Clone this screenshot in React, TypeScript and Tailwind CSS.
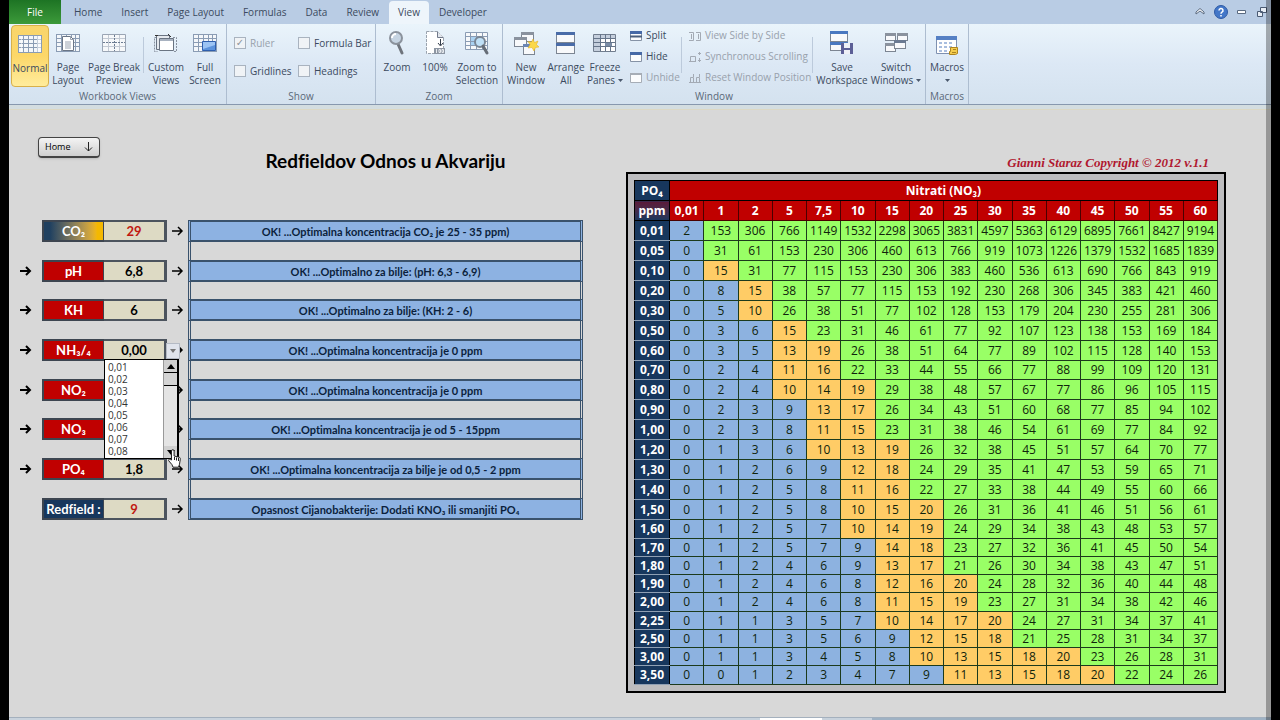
import type { ReactNode } from 'react'

const tabs = ['Home', 'Insert', 'Page Layout', 'Formulas', 'Data', 'Review', 'View', 'Developer']

const nitrates = ['0,01', '1', '2', '5', '7,5', '10', '15', '20', '25', '30', '35', '40', '45', '50', '55', '60']

const ratios: [string, number[]][] = [
    ['0,01', [2, 153, 306, 766, 1149, 1532, 2298, 3065, 3831, 4597, 5363, 6129, 6895, 7661, 8427, 9194]],
    ['0,05', [0, 31, 61, 153, 230, 306, 460, 613, 766, 919, 1073, 1226, 1379, 1532, 1685, 1839]],
    ['0,10', [0, 15, 31, 77, 115, 153, 230, 306, 383, 460, 536, 613, 690, 766, 843, 919]],
    ['0,20', [0, 8, 15, 38, 57, 77, 115, 153, 192, 230, 268, 306, 345, 383, 421, 460]],
    ['0,30', [0, 5, 10, 26, 38, 51, 77, 102, 128, 153, 179, 204, 230, 255, 281, 306]],
    ['0,50', [0, 3, 6, 15, 23, 31, 46, 61, 77, 92, 107, 123, 138, 153, 169, 184]],
    ['0,60', [0, 3, 5, 13, 19, 26, 38, 51, 64, 77, 89, 102, 115, 128, 140, 153]],
    ['0,70', [0, 2, 4, 11, 16, 22, 33, 44, 55, 66, 77, 88, 99, 109, 120, 131]],
    ['0,80', [0, 2, 4, 10, 14, 19, 29, 38, 48, 57, 67, 77, 86, 96, 105, 115]],
    ['0,90', [0, 2, 3, 9, 13, 17, 26, 34, 43, 51, 60, 68, 77, 85, 94, 102]],
    ['1,00', [0, 2, 3, 8, 11, 15, 23, 31, 38, 46, 54, 61, 69, 77, 84, 92]],
    ['1,20', [0, 1, 3, 6, 10, 13, 19, 26, 32, 38, 45, 51, 57, 64, 70, 77]],
    ['1,30', [0, 1, 2, 6, 9, 12, 18, 24, 29, 35, 41, 47, 53, 59, 65, 71]],
    ['1,40', [0, 1, 2, 5, 8, 11, 16, 22, 27, 33, 38, 44, 49, 55, 60, 66]],
    ['1,50', [0, 1, 2, 5, 8, 10, 15, 20, 26, 31, 36, 41, 46, 51, 56, 61]],
    ['1,60', [0, 1, 2, 5, 7, 10, 14, 19, 24, 29, 34, 38, 43, 48, 53, 57]],
    ['1,70', [0, 1, 2, 5, 7, 9, 14, 18, 23, 27, 32, 36, 41, 45, 50, 54]],
    ['1,80', [0, 1, 2, 4, 6, 9, 13, 17, 21, 26, 30, 34, 38, 43, 47, 51]],
    ['1,90', [0, 1, 2, 4, 6, 8, 12, 16, 20, 24, 28, 32, 36, 40, 44, 48]],
    ['2,00', [0, 1, 2, 4, 6, 8, 11, 15, 19, 23, 27, 31, 34, 38, 42, 46]],
    ['2,25', [0, 1, 1, 3, 5, 7, 10, 14, 17, 20, 24, 27, 31, 34, 37, 41]],
    ['2,50', [0, 1, 1, 3, 5, 6, 9, 12, 15, 18, 21, 25, 28, 31, 34, 37]],
    ['3,00', [0, 1, 1, 3, 4, 5, 8, 10, 13, 15, 18, 20, 23, 26, 28, 31]],
    ['3,50', [0, 0, 1, 2, 3, 4, 7, 9, 11, 13, 15, 18, 20, 22, 24, 26]],
]

const params = [
    { id: 'co2', name: 'CO₂', value: '29', kind: 'result', message: 'OK! ...Optimalna koncentracija CO₂ je 25 - 35 ppm)', gap: 'h-[18px]' },
    { id: 'ph', name: 'pH', value: '6,8', kind: 'input', message: 'OK! ...Optimalno za bilje: (pH: 6,3 - 6,9)', gap: 'h-[17px]' },
    { id: 'kh', name: 'KH', value: '6', kind: 'input', message: 'OK! ...Optimalno za bilje: (KH: 2 - 6)', gap: 'h-[18px]' },
    { id: 'nh', name: 'NH₃/₄', value: '0,00', kind: 'list', message: 'OK! ...Optimalna koncentracija je 0 ppm', gap: 'h-[18px]' },
    { id: 'no2', name: 'NO₂', value: '0,00', kind: 'input', message: 'OK! ...Optimalna koncentracija je 0 ppm', gap: 'h-[17px]' },
    { id: 'no3', name: 'NO₃', value: '15', kind: 'input', message: 'OK! ...Optimalna koncentracija je od 5 - 15ppm', gap: 'h-[18px]' },
    { id: 'po4', name: 'PO₄', value: '1,8', kind: 'input', message: 'OK! ...Optimalna koncentracija za bilje je od 0,5 - 2 ppm', gap: 'h-[18px]' },
    { id: 'redfield', name: 'Redfield :', value: '9', kind: 'result', message: 'Opasnost Cijanobakterije: Dodati KNO₃ ili smanjiti PO₄', gap: '' },
]

const options = ['0,01', '0,02', '0,03', '0,04', '0,05', '0,06', '0,07', '0,08']

const Grid = ({ children }: { children?: ReactNode }) => (
    <svg width="26" height="22" viewBox="0 0 26 22">
        <path d="M1 2h24v18H1z" fill="#f4f7fa" />
        <path d="M1 2.500h24M1 6.500h24M1 10.500h24M1 14.500h24M1 19.500h24M1.500 2v18M6.500 2v18M11.500 2v18M16.500 2v18M20.500 2v18M24.500 2v18" stroke="#8a9cb4" fill="none" />
        {children}
    </svg>
)

const NormalIcon = () => <Grid><path d="M4 3h1v16H4zM20 3h4v16h-4z" fill="#fff" opacity=".5" /></Grid>

const PageLayoutIcon = () => (
    <Grid>
        <path d="M7.500 4.500h8l3 3v11h-11z" fill="#fff" stroke="#6b7686" />
        <path d="M15.500 4.500v3h3M10 10h6M10 12h6M10 14h6M10 16h6" stroke="#9aa3b0" fill="none" />
    </Grid>
)

const PageBreakIcon = () => (
    <svg width="26" height="22" viewBox="0 0 26 22">
        <path d="M1.500 2.500h23v17h-23z" fill="#f6f8fa" stroke="#9aa5b4" />
        <path d="M2 6.500h22M2 14.500h22M7.500 3v16M18.500 3v16" stroke="#c3cad4" />
        <path d="M2 10.500h22M13.500 3v16" stroke="#6c7c92" strokeDasharray="2 1" />
    </svg>
)

const CustomIcon = () => (
    <svg width="26" height="22" viewBox="0 0 26 22">
        <path d="M3.500 5.500h-2v14h3M20 5.500h3.500v14H20" stroke="#88919e" fill="none" strokeDasharray="2 1" />
        <path d="M3.500 3.500h13v14h-13z" fill="#e6eaef" stroke="#6a7482" />
        <path d="M6.500 6.500h14v12h-14z" fill="#fff" stroke="#6a7482" />
        <path d="M7 7h13v2H7z" fill="#a8b2c0" />
        <path d="M2 3.500h3M15 2l3 3" stroke="#333" />
    </svg>
)

const FullScreenIcon = () => (
    <Grid>
        <path d="M10.500 9.500h13v9h-13z" fill="#5c93dc" stroke="#2e5fae" />
        <path d="M11 10h12v3L11 17z" fill="#9cc4f4" />
    </Grid>
)

const ZoomIcon = () => (
    <svg width="20" height="26" viewBox="0 0 20 26">
        <path d="M11 14l4 9" stroke="#6f747c" strokeWidth="3" strokeLinecap="round" />
        <circle cx="9" cy="8" r="6" fill="#c6d4e2" stroke="#8b929c" strokeWidth="2" />
        <path d="M5 8a4 4 0 0 1 4-4" stroke="#fff" strokeWidth="2" fill="none" />
    </svg>
)

const HundredIcon = () => (
    <svg width="24" height="26" viewBox="0 0 24 26">
        <path d="M3.500 1.500h11l6 6v16h-17z" fill="#fff" stroke="#9aa3ae" strokeDasharray="3 1" />
        <path d="M14.500 1.500v6h6" fill="#e2e6ec" stroke="#70798a" />
        <path d="M17.500 9v6M15 13l2.500 3 2.500-3" stroke="#333c4a" fill="none" />
        <path d="M11 18h11v6H11z" fill="#8c95a2" />
        <path d="M13.500 19v4M16 19.500h1.500v3H16zM19 19.500h1.500v3H19z" stroke="#e8ebef" fill="none" />
    </svg>
)

const ZoomSelectionIcon = () => (
    <svg width="26" height="26" viewBox="0 0 26 26">
        <path d="M1.500 2.500h22v17h-22z" fill="#f7f9fb" stroke="#8a9cb4" />
        <path d="M6 6h13v10H6z" fill="#a9d2f2" />
        <path d="M1 6.500h22M1 11.500h22M1 15.500h22M6.500 2v17M12.500 2v17M18.500 2v17" stroke="#8a9cb4" />
        <circle cx="16" cy="12" r="5" fill="#bfe0f7" stroke="#7a8694" strokeWidth="2" />
        <path d="M19 16l4 7" stroke="#666d77" strokeWidth="3" strokeLinecap="round" />
    </svg>
)

const Win = ({ x, y, w, h, bar = '#8a929e' }: { x: number; y: number; w: number; h: number; bar?: string }) => (
    <>
        <rect x={x + 0.5} y={y + 0.5} width={w} height={h} fill="#f8f9fb" stroke="#7c8592" />
        <rect x={x} y={y} width={w + 1} height="3" fill={bar} />
    </>
)

const NewWindowIcon = () => (
    <svg width="26" height="26" viewBox="0 0 26 26">
        <Win x={8} y={2} w={12} h={9} />
        <Win x={1} y={7} w={12} h={9} />
        <Win x={10} y={14} w={11} h={10} bar="#6b86b4" />
        <path d="M20 9l1.500 3.500L25 11l-1.500 3.500L26 17l-3.500.5L21 21l-2-3.500-4 .5 2-3.500-2-3 3.500.5z" fill="#fbd84a" stroke="#e0aa1c" strokeWidth=".5" />
    </svg>
)

const ArrangeIcon = () => (
    <svg width="22" height="26" viewBox="0 0 22 26">
        <Win x={1} y={2} w={18} h={10} bar="#4a6ca8" />
        <Win x={1} y={13} w={18} h={10} bar="#4a6ca8" />
    </svg>
)

const FreezeIcon = () => (
    <svg width="26" height="22" viewBox="0 0 26 22">
        <path d="M1.500 2.500h22v17h-22z" fill="#fff" stroke="#717d8e" />
        <path d="M2 3h21v3H2zM2 6h6v13H2z" fill="#c5cfdd" />
        <path d="M1 6.500h22M1 10.500h22M1 14.500h22M8.500 2v17M13.500 2v17M18.500 2v17" stroke="#66758a" />
        <path d="M13 11h7v3h-7z" fill="#7a8ca6" />
    </svg>
)

const SaveWorkspaceIcon = () => (
    <svg width="26" height="26" viewBox="0 0 26 26">
        <Win x={1} y={1} w={17} h={10} bar="#4a78c0" />
        <Win x={1} y={12} w={17} h={8} bar="#4a78c0" />
        <path d="M12 13h12v11H12z" fill="#5c5f96" />
        <path d="M15 13h6v5h-6zM15 20h6v4h-6z" fill="#eef0f6" />
    </svg>
)

const SwitchIcon = () => (
    <svg width="26" height="22" viewBox="0 0 26 22">
        <Win x={2} y={1} w={10} h={7} />
        <Win x={14} y={1} w={10} h={7} />
        <Win x={2} y={11} w={10} h={8} />
        <Win x={11} y={8} w={11} h={8} bar="#6b7a92" />
    </svg>
)

const MacrosIcon = () => (
    <svg width="24" height="26" viewBox="0 -4 24 26">
        <path d="M1.500 2.500h20v17h-20z" fill="#fff" stroke="#7f91b0" />
        <path d="M1 2h21v4H1z" fill="#5580c4" />
        <path d="M4 8h3v2H4zM9 8h3v2H9zM14 8h3v2h-3zM4 12h3v2H4zM9 12h3v2H9zM14 12h3v2h-3zM4 16h3v2H4zM9 16h3v2H9z" fill="#a9bedf" />
        <path d="M15.500 13.500h7v6l-2 1h-6v-3h1z" fill="#f4cc4c" stroke="#ad8420" />
        <path d="M18 15.500h3M17 18.500h4" stroke="#ad8420" />
    </svg>
)

const SmallWin = ({ kind }: { kind: string }) => (
    <svg width="14" height="12" viewBox="0 0 14 12">
        <path d="M1.500 1.500h11v9h-11z" fill="#fbfcfd" stroke={kind === 'Unhide' ? '#a6adb6' : '#8693a6'} />
        {kind !== 'Unhide' && <path d="M1 1h12v3H1z" fill="#4669a6" />}
        {kind === 'Unhide' && <path d="M1 1h12v2H1z" fill="#a6adb6" />}
        {kind === 'Split' && <path d="M1 6.500h12" stroke="#4a5f7c" strokeWidth="2" />}
    </svg>
)

const SideIcon = ({ kind }: { kind: string }) => (
    <svg width="14" height="12" viewBox="0 0 14 12" fill="none" stroke="#a3aab4">
        {kind === 'View Side by Side' && <path d="M1 2.500h4.500v8H1M8 2.500h4.500v8H8M3.500 4v5M10.500 4v5" />}
        {kind === 'Synchronous Scrolling' && <path d="M1 10.500h7M2.500 5.500h5v5h-5zM11.500 1v3M10 2.500h3M11.500 7v4M10 9.500h3" />}
        {kind === 'Reset Window Position' && <path d="M1 10.500h12M2.500 5.500h3v5h-3zM8.500 5.500h3v5h-3zM5.500 2v3M11.500 2v3" />}
    </svg>
)

const Caret = () => <svg width="5" height="3" viewBox="0 0 5 3"><path d="M0 0h5L2.500 3z" fill="#4a586c" /></svg>

const BigButton = ({ lines, icon, width, active = false, menu = false }: { lines: string[]; icon: ReactNode; width: string; active?: boolean; menu?: boolean }) => (
    <button className={`${width} flex h-[62px] shrink-0 flex-col items-center whitespace-nowrap pt-1 leading-[13px] ${active ? 'rounded-sm border border-[#d8b04a] bg-linear-to-b from-[#f9d56c] via-[#fcd768] to-[#ffec9c]' : ''}`}>
        <span className="mb-1 flex h-7 items-center">{icon}</span>
        {lines.map((line, i) => (
            <span key={line} className="flex h-[13px] items-center gap-[3px]">
                {line}
                {menu && i === lines.length - 1 && <Caret />}
            </span>
        ))}
    </button>
)

const Group = ({ label, children }: { label: string; children: ReactNode }) => (
    <section aria-label={label} className="flex shrink-0 flex-col border-r border-[#adbdd0] pt-px">
        <div className="flex h-[65px] items-start px-0.5">{children}</div>
        <p className="text-center leading-[13px] text-[#5a6878]">{label}</p>
    </section>
)

const Divider = () => <span className="mx-0.5 mt-3 h-9 w-px bg-[#bccadb]"></span>

const Check = ({ label, checked = false, disabled = false }: { label: string; checked?: boolean; disabled?: boolean }) => (
    <label className={`flex h-7 items-center gap-1 whitespace-nowrap ${disabled ? 'text-[#98a1ac]' : ''}`}>
        <input type="checkbox" defaultChecked={checked} disabled={disabled} className="size-3 appearance-none border border-[#a9b3bf] bg-[#f0f3f6] before:block before:text-center before:font-['DejaVu_Sans'] before:text-[10px] before:leading-[10px] before:text-[#8d949d] checked:before:content-['✓']" />
        {label}
    </label>
)

const Ribbon = () => (
    <header className="font-['Open_Sans',sans-serif] text-[10px] text-[#3b4a5e]">
        <nav className="flex h-6 items-stretch bg-[#b9cce4]">
            <button className="w-[52px] bg-linear-to-b from-[#1d7424] to-[#3c9a3a] text-white">File</button>
            <div className="ml-1 flex gap-px">
                {tabs.map((tab) => (
                    <button key={tab} className={`whitespace-nowrap px-[9px] ${tab === 'View' ? 'mt-px rounded-t-sm bg-[#eef5fb]' : ''}`}>{tab}</button>
                ))}
            </div>
            <div className="ml-auto flex items-center gap-2 pr-[3px]">
                <button aria-label="Minimize ribbon"><svg width="12" height="12" viewBox="0 0 12 12"><path d="M2 6l4-3.500L10 6v2L6 5 2 8z" fill="#fff" stroke="#5a6a80" /></svg></button>
                <button aria-label="Help"><svg width="14" height="14" viewBox="0 0 14 14"><circle cx="7" cy="7" r="6.500" fill="#4377c8" stroke="#2f5aa4" /><path d="M5 5.500a2 2 0 1 1 3 1.700c-.8.5-1 .8-1 1.600M7 10v1.500" fill="none" stroke="#fff" strokeWidth="1.500" /></svg></button>
                <button aria-label="Minimize"><svg width="12" height="12" viewBox="0 0 12 12"><path d="M1.500 4.500h8v3h-8z" fill="#fff" stroke="#5a6a80" /></svg></button>
                <button aria-label="Restore"><svg width="12" height="12" viewBox="0 0 12 12"><path d="M4.500 1.500h6v5h-6zM1.500 5.500h5v5h-5z" fill="#e8eef6" stroke="#4a5a72" /></svg></button>
            </div>
        </nav>
        <div className="flex h-[81px] overflow-hidden border-b border-[#8798ae] bg-linear-to-b from-[#eaf4fb] via-[#dce8f5] to-[#d4e2ef]">
            <Group label="Workbook Views">
                <BigButton active width="w-[38px]" lines={['Normal']} icon={<NormalIcon />} />
                <BigButton width="w-[38px]" lines={['Page', 'Layout']} icon={<PageLayoutIcon />} />
                <BigButton width="w-[54px]" lines={['Page Break', 'Preview']} icon={<PageBreakIcon />} />
                <Divider />
                <BigButton width="w-[40px]" lines={['Custom', 'Views']} icon={<CustomIcon />} />
                <BigButton width="w-[38px]" lines={['Full', 'Screen']} icon={<FullScreenIcon />} />
            </Group>
            <Group label="Show">
                <div className="grid w-[144px] grid-cols-[64px_1fr] pl-[5px] pt-1">
                    <Check label="Ruler" checked disabled />
                    <Check label="Formula Bar" />
                    <Check label="Gridlines" />
                    <Check label="Headings" />
                </div>
            </Group>
            <Group label="Zoom">
                <BigButton width="w-[38px]" lines={['Zoom']} icon={<ZoomIcon />} />
                <BigButton width="w-[38px]" lines={['100%']} icon={<HundredIcon />} />
                <BigButton width="w-[46px]" lines={['Zoom to', 'Selection']} icon={<ZoomSelectionIcon />} />
            </Group>
            <Group label="Window">
                <BigButton width="w-[42px]" lines={['New', 'Window']} icon={<NewWindowIcon />} />
                <BigButton width="w-[38px]" lines={['Arrange', 'All']} icon={<ArrangeIcon />} />
                <BigButton menu width="w-[40px]" lines={['Freeze', 'Panes']} icon={<FreezeIcon />} />
                <div className="w-[54px] pl-1">
                    {['Split', 'Hide', 'Unhide'].map((item) => (
                        <button key={item} disabled={item === 'Unhide'} className="flex h-[21px] items-center gap-[3px] disabled:text-[#98a1ac]"><SmallWin kind={item} />{item}</button>
                    ))}
                </div>
                <Divider />
                <div className="w-[126px] whitespace-nowrap pl-1">
                    {['View Side by Side', 'Synchronous Scrolling', 'Reset Window Position'].map((item) => (
                        <button key={item} disabled className="flex h-[21px] items-center gap-[3px] text-[#98a1ac]"><SideIcon kind={item} />{item}</button>
                    ))}
                </div>
                <Divider />
                <BigButton width="w-[54px]" lines={['Save', 'Workspace']} icon={<SaveWorkspaceIcon />} />
                <BigButton menu width="w-[54px]" lines={['Switch', 'Windows']} icon={<SwitchIcon />} />
            </Group>
            <Group label="Macros">
                <BigButton menu width="w-[38px]" lines={['Macros', '']} icon={<MacrosIcon />} />
            </Group>
        </div>
    </header>
)

const Arrow = ({ bold = false }: { bold?: boolean }) => (
    <svg width="12" height="10" viewBox="0 0 12 10" fill="none" stroke="#000" strokeWidth={bold ? 2 : 1.5}>
        <path d="M0 5h10M6 1l4 4-4 4" />
    </svg>
)

const OpenList = () => (
    <div className="absolute left-0 top-full z-10 flex w-[75px] border border-r-2 border-black bg-white">
        <ul role="listbox" aria-label="NH₃/₄" className="flex-1 py-px pl-[3px] font-['Open_Sans',sans-serif] text-[10px] leading-3 font-normal text-[#333]">
            {options.map((option) => <li key={option} role="option" aria-selected={false}>{option}</li>)}
        </ul>
        <div className="flex w-[14px] flex-col border-l border-[#999] bg-[#e4e4e4]">
            <span className="flex h-[13px] items-center justify-center border-b border-black bg-[#d0d0d0]"><svg width="8" height="5"><path d="M0 5l4-5 4 5z" /></svg></span>
            <span className="h-[13px] border-b border-black bg-[#d4d4d4]"></span>
            <span className="mt-auto flex h-3 items-center justify-center bg-[#d0d0d0]"><svg width="8" height="5"><path d="M0 0l4 5 4-5z" /></svg></span>
        </div>
        <svg className="absolute -bottom-[10px] -right-1" width="13" height="19" viewBox="0 0 13 19">
            <path d="M3.500 11V2a1.300 1.300 0 0 1 2.600 0v5l5 1.200c1 .3 1.300 1 1.200 2l-.8 5-1 3H5l-1-2.500-3.300-4c-.6-1 .6-2 1.500-1.200z" fill="#fff" stroke="#222" />
            <path d="M6.500 8v3M8.500 8.500v3M10.500 9v3" stroke="#222" />
        </svg>
    </div>
)

const nameColor: Record<string, string> = {
    co2: 'bg-linear-to-r from-[#1f4060] from-10% to-[#f4b800] to-90%',
    redfield: 'bg-[#17375d]',
}

const Param = ({ id, name, value, kind, message, gap }: (typeof params)[number]) => (
    <>
        <div className="grid h-[22px] grid-cols-[24px_62px_63px_21px_minmax(0,1fr)] text-[13px] font-bold">
            <span className="flex items-center pl-0.5">{kind !== 'result' && <Arrow bold />}</span>
            <label htmlFor={id} className={`flex items-center justify-center border-2 border-r border-[#3d4550] leading-none text-white ${nameColor[id] ?? 'bg-[#c00000]'}`}>{name}</label>
            <div className="relative flex border-y-2 border-r-[3px] border-[#4c545e] bg-[#dddac4]">
                {kind === 'result' && <output id={id} className="flex-1 self-center text-center leading-none text-[#c01810]">{value}</output>}
                {kind === 'input' && <input id={id} defaultValue={value} className="w-full text-center leading-none outline-none" />}
                {kind === 'list' && (
                    <>
                        <select id={id} className="w-full appearance-none text-center leading-none outline-none [text-align-last:center]"><option>{value}</option></select>
                        <span className="absolute -right-4 top-0.5 z-10 flex h-4 w-[14px] items-center justify-center border border-[#b4bac4] bg-[#e0e4ec]"><svg width="6" height="4"><path d="M0 0h6L3 4z" fill="#777" /></svg></span>
                        <OpenList />
                    </>
                )}
            </div>
            <span className="flex items-center justify-center"><Arrow /></span>
            <p className="flex items-center justify-center whitespace-nowrap border-x-[3px] border-y-2 border-[#3a526c] bg-[#8db2e2] text-[11px] leading-none text-[#0b1f3c] [border-left-style:double] [border-right-style:double]">{message}</p>
        </div>
        {gap && <div className={`${gap} ml-[170px] border-x-[3px] border-double border-[#3a526c]`}></div>}
    </>
)

const cellColor = (n: number) => (n < 10 ? 'bg-[#8db2e0]' : n <= 20 ? 'bg-[#ffcc66]' : 'bg-[#99ff66]')

const rowHeight = (i: number) => {
    if (i < 16) return i % 8 === 7 ? 'h-[19px]' : 'h-[20px]'
    return i % 4 === 3 ? 'h-[19px]' : 'h-[18px]'
}

const Matrix = () => (
    <div className="border-2 border-black bg-[#bdbdbf] p-1.5">
        <table className="w-full table-fixed border-collapse text-center font-['Open_Sans',sans-serif] text-[12px] leading-none text-[#10240c]">
            <thead className="font-bold text-white">
                <tr className="h-5 bg-[#c00000]">
                    <th scope="col" className="w-[35px] border border-black bg-[#17375d] p-0">PO₄</th>
                    <th scope="colgroup" colSpan={16} className="border border-black p-0">Nitrati (NO₃)</th>
                </tr>
                <tr className="h-5 bg-[#c00000]">
                    <th scope="col" className="border border-black bg-linear-to-b from-[#5c1838] to-[#17375d] p-0">ppm</th>
                    {nitrates.map((n) => <th key={n} scope="col" className="border border-[#4a0000] p-0">{n}</th>)}
                </tr>
            </thead>
            <tbody>
                {ratios.map(([po4, values], i) => (
                    <tr key={po4} className={rowHeight(i)}>
                        <th scope="row" className="border-x border-y border-x-black border-y-[#8fa0b4] bg-[#17375d] p-0 font-bold text-white">{po4}</th>
                        {values.map((n, j) => <td key={j} className={`border border-[#1c3a1c] p-0 ${cellColor(n)}`}>{n}</td>)}
                    </tr>
                ))}
            </tbody>
        </table>
    </div>
)

const App = () => {
    return (
        <div className="min-h-screen bg-black px-[9px]">
            <div className="relative flex min-h-screen flex-col bg-[#d8d8d8]">
                <Ribbon />
                <div className="h-[5px] border-b border-[#dcd8c4] bg-[#d3dde0]"></div>
                <main className="grid grid-cols-[minmax(0,565fr)_minmax(0,600fr)] gap-x-[43px] pl-[9px] pr-[45px] font-[Lato,'Noto_Sans',sans-serif] text-black [font-variant-ligatures:none]">
                    <section>
                        <div className="flex h-[110px] pt-[27px]">
                            <div className="w-[170px] pl-5">
                                <button className="flex h-[21px] w-[62px] items-center justify-between rounded-sm border border-b-2 border-[#444] bg-linear-to-b from-[#f4f4f4] to-[#cfcfcf] px-1.5 font-['Open_Sans',sans-serif] text-[9px] shadow">
                                    Home
                                    <svg width="9" height="10" viewBox="0 0 9 10" fill="none" stroke="#222"><path d="M4.500 0v9M1 5.500l3.500 3.500L8 5.500" /></svg>
                                </button>
                            </div>
                            <h1 className="flex-1 pt-3 text-center text-[19px] leading-6 font-bold">Redfieldov Odnos u Akvariju</h1>
                        </div>
                        {params.map((param) => <Param key={param.id} {...param} />)}
                    </section>
                    <section>
                        <p className="flex h-[62px] items-end justify-end pr-[17px] font-['Liberation_Serif',serif] text-[13px] leading-[18px] font-bold text-[#b01830] italic">Gianni Staraz Copyright © 2012 v.1.1</p>
                        <Matrix />
                    </section>
                </main>
                <footer className="mt-auto flex h-[3px] items-stretch border-t border-[#a4b0bd] bg-[#c8d2dc]">
                    <span className="ml-[751px] w-[62px] bg-white"></span>
                    <span className="ml-[50px] flex-1 bg-[#9fb2c4]"></span>
                </footer>
                <span className="absolute inset-y-0 right-0 w-[5px] bg-black/30"></span>
            </div>
        </div>
    )
}

export default App
